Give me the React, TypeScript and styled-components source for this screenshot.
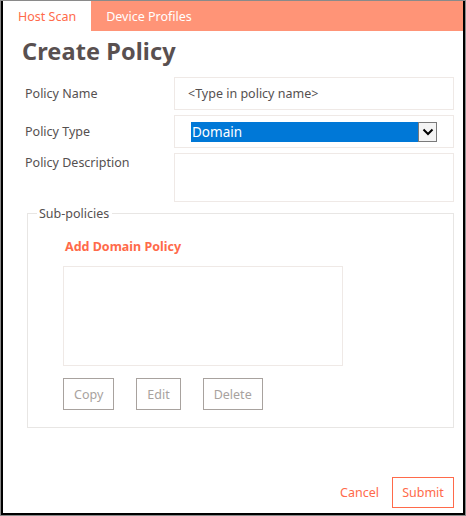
import React from 'react';
import styled, { createGlobalStyle } from 'styled-components';

const GlobalStyle = createGlobalStyle`
   html, body {
      margin: 0;
      padding: 0;
      background: #ffffff;
   }
   body {
      font-family: 'Noto Sans', 'Open Sans', sans-serif;
      color: #555050;
   }
   * {
      box-sizing: border-box;
   }
`;

const ORANGE = '#ff9477';
const ACCENT = '#ff6a4a';

function Tab({ label, active }: { label: string; active?: boolean }) {
   return <TabItem $active={!!active}>{label}</TabItem>;
}

function FormRow({
   label,
   tall,
   children,
}: {
   label: string;
   tall?: boolean;
   children: React.ReactNode;
}) {
   return (
      <Row $tall={!!tall}>
         <RowLabel $tall={!!tall}>{label}</RowLabel>
         <FieldBox $tall={!!tall}>{children}</FieldBox>
      </Row>
   );
}

export default function App() {
   return (
      <>
         <GlobalStyle />
         <Window>
            <TabBar>
               <Tab label='Host Scan' active />
               <Tab label='Device Profiles' />
            </TabBar>
            <Content>
               <Title>Create Policy</Title>
               <Form>
                  <FormRow label='Policy Name'>
                     <Placeholder>&lt;Type in policy name&gt;</Placeholder>
                  </FormRow>
                  <FormRow label='Policy Type'>
                     <SelectBox>
                        <SelectValue>Domain</SelectValue>
                        <SelectArrow>
                           <svg width='12' height='8' viewBox='0 0 12 8'>
                              <path
                                 d='M1.5 1.5 L6 6 L10.5 1.5'
                                 fill='none'
                                 stroke='#000'
                                 strokeWidth='2'
                              />
                           </svg>
                        </SelectArrow>
                     </SelectBox>
                  </FormRow>
                  <FormRow label='Policy Description' tall>
                     {null}
                  </FormRow>
               </Form>
               <SubPolicies>
                  <Legend>Sub-policies</Legend>
                  <SubBody>
                     <AddLink>Add Domain Policy</AddLink>
                     <PolicyList />
                     <ButtonRow>
                        <GhostButton>Copy</GhostButton>
                        <GhostButton>Edit</GhostButton>
                        <GhostButton>Delete</GhostButton>
                     </ButtonRow>
                  </SubBody>
               </SubPolicies>
               <Footer>
                  <CancelLink>Cancel</CancelLink>
                  <SubmitButton>Submit</SubmitButton>
               </Footer>
            </Content>
         </Window>
      </>
   );
}

const Window = styled.div`
   width: 466px;
   height: 516px;
   display: flex;
   flex-direction: column;
   background: #ffffff;
   border-top: 1px solid #000;
   border-left: 3px solid #000;
   border-right: 3px solid #000;
   border-bottom: 3px solid #000;
   outline: 1px solid #8a8a8a;
   outline-offset: -1px;
`;

const TabBar = styled.div`
   display: flex;
   height: 30px;
   background: ${ORANGE};
   flex-shrink: 0;
`;

const TabItem = styled.div<{ $active: boolean }>`
   display: flex;
   align-items: center;
   padding: 0 15px 0 15px;
   font-size: 12.5px;
   background: ${(p) => (p.$active ? '#ffffff' : 'transparent')};
   color: ${(p) => (p.$active ? ACCENT : '#ffffff')};
`;

const Content = styled.div`
   flex: 1;
   display: flex;
   flex-direction: column;
   padding: 0 9px 5px 19px;
`;

const Title = styled.h1`
   margin: 4px 0 0 0;
   font-size: 23.5px;
   line-height: 32px;
   font-weight: 700;
   color: #595050;
   letter-spacing: 0.1px;
`;

const Form = styled.div`
   display: flex;
   flex-direction: column;
   gap: 5px;
   margin-top: 10px;
`;

const Row = styled.div<{ $tall: boolean }>`
   display: grid;
   grid-template-columns: 152px 1fr;
   align-items: ${(p) => (p.$tall ? 'start' : 'center')};
`;

const RowLabel = styled.div<{ $tall: boolean }>`
   padding-left: 3px;
   padding-top: ${(p) => (p.$tall ? '1px' : '0')};
   font-size: 12.5px;
   color: #555050;
`;

const FieldBox = styled.div<{ $tall: boolean }>`
   height: ${(p) => (p.$tall ? '49px' : '33px')};
   border: 1px solid #efe9e6;
   display: flex;
   align-items: center;
`;

const Placeholder = styled.span`
   padding-left: 13px;
   font-size: 12.5px;
   color: #555050;
`;

const SelectBox = styled.div`
   display: flex;
   align-items: stretch;
   margin-left: 16px;
   width: 246px;
   height: 20px;
`;

const SelectValue = styled.div`
   flex: 1;
   background: #0078d7;
   color: #ffffff;
   font-size: 13.5px;
   line-height: 20px;
   padding-left: 1px;
`;

const SelectArrow = styled.div`
   width: 19px;
   border: 1px solid #7a7a7a;
   background: #f4f4f4;
   display: flex;
   align-items: center;
   justify-content: center;
`;

const SubPolicies = styled.fieldset`
   margin: 3px 0 0 5px;
   padding: 0;
   border: 1px solid #e8e6e4;
   height: 223px;
`;

const Legend = styled.legend`
   margin-left: 9px;
   padding: 0 3px 0 2px;
   font-size: 12.5px;
   color: #555050;
`;

const SubBody = styled.div`
   padding: 16px 0 0 37px;
`;

const AddLink = styled.div`
   font-size: 12.5px;
   font-weight: 700;
   color: ${ACCENT};
   line-height: 18px;
`;

const PolicyList = styled.div`
   margin: 10px 0 0 -2px;
   width: 280px;
   height: 100px;
   border: 1px solid #efe9e6;
`;

const ButtonRow = styled.div`
   display: flex;
   gap: 22px;
   margin: 12px 0 0 -2px;
`;

const GhostButton = styled.div`
   height: 32px;
   padding: 0 10px;
   border: 1px solid #a8a29e;
   display: flex;
   align-items: center;
   font-size: 12.5px;
   color: #a8a29e;
`;

const Footer = styled.div`
   margin-top: auto;
   display: flex;
   justify-content: flex-end;
   align-items: center;
   gap: 13px;
`;

const CancelLink = styled.span`
   font-size: 12.5px;
   color: ${ACCENT};
`;

const SubmitButton = styled.div`
   height: 31px;
   width: 62px;
   border: 1px solid ${ACCENT};
   display: flex;
   align-items: center;
   justify-content: center;
   font-size: 12.5px;
   color: ${ACCENT};
`;
